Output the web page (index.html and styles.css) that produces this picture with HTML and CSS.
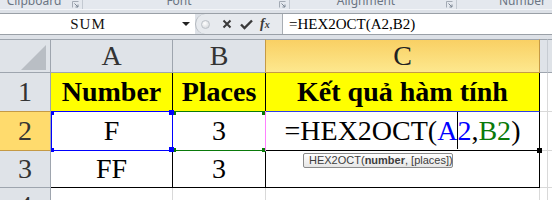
FILE: index.html
```html
<!DOCTYPE html>
<html>
<head>
<meta charset="utf-8">
<link rel="stylesheet" href="styles.css">
</head>
<body>
<div class="app">
  <div class="ribbon">
    <div class="grp g1"><span class="lbl">Clipboard</span><span class="launch"><svg width="7" height="7" viewBox="0 0 7 7"><path d="M0.5 6.5V0.5H6.5" fill="none" stroke="#a3aab4"/><path d="M2.5 2.5L6 6M6 3.5V6H3.5" fill="none" stroke="#7d8794"/></svg></span></div>
    <div class="grp g2"><span class="lbl">Font</span><span class="launch"><svg width="7" height="7" viewBox="0 0 7 7"><path d="M0.5 6.5V0.5H6.5" fill="none" stroke="#a3aab4"/><path d="M2.5 2.5L6 6M6 3.5V6H3.5" fill="none" stroke="#7d8794"/></svg></span></div>
    <div class="grp g3"><span class="lbl">Alignment</span><span class="launch"><svg width="7" height="7" viewBox="0 0 7 7"><path d="M0.5 6.5V0.5H6.5" fill="none" stroke="#a3aab4"/><path d="M2.5 2.5L6 6M6 3.5V6H3.5" fill="none" stroke="#7d8794"/></svg></span></div>
    <div class="grp g4"><span class="lbl lbl4">Number</span></div>
  </div>
  <div class="fwrap">
    <div class="fbar">
      <div class="namebox"><span class="nm">SUM</span><span class="dd"></span></div>
      <div class="btns">
        <span class="grip"></span>
        <svg class="ico-x" width="10" height="10" viewBox="0 0 10 10"><path d="M1.5 1.5L8.5 8.5M8.5 1.5L1.5 8.5" stroke="#3a3a3a" stroke-width="2" fill="none"/></svg>
        <svg class="ico-ok" width="13" height="11" viewBox="0 0 13 11"><path d="M1 5.5L4.5 9L12 1.5" stroke="#3a3a3a" stroke-width="2.4" fill="none"/></svg>
        <span class="fx">f<span class="fxx">x</span></span>
      </div>
      <div class="finput">=HEX2OCT(A2,B2)</div>
    </div>
  </div>
  <div class="sheet">
    <div class="hd corner"><span class="tri"></span></div>
    <div class="hd ch">A</div>
    <div class="hd ch chb">B</div>
    <div class="hd ch chsel">C</div>
    <div class="hd ch chd"></div>
    <div class="hd ch che"></div>

    <div class="hd rh rh1">1</div>
    <div class="c y">Number</div>
    <div class="c y">Places</div>
    <div class="c y c1">Kết quả hàm tính</div>
    <div class="e"></div>
    <div class="e last"></div>

    <div class="hd rh rhsel">2</div>
    <div class="c a2"><span class="ref refA"></span><span class="h hb hA1"></span><span class="h hb hA2"></span><span class="h hb hA3"></span><span class="h hb hA4"></span>F</div>
    <div class="c b2"><span class="ref refB"></span><span class="h hg hB1"></span><span class="h hg hB2"></span><span class="h hg hB3"></span><span class="h hg hB4"></span>3</div>
    <div class="c c2"><span class="pink"></span><span class="h hk hC"></span><span class="ftx">=HEX2OCT(<span class="blu">A<span class="caret">2</span></span>,<span class="grn">B2</span>)</span></div>
    <div class="e"></div>
    <div class="e last"></div>

    <div class="hd rh">3</div>
    <div class="c">FF</div>
    <div class="c">3</div>
    <div class="c c3"><span class="tip">HEX2OCT(<b>number</b>, [places])</span></div>
    <div class="e"></div>
    <div class="e last"></div>

    <div class="hd rh">4</div>
    <div class="e"></div>
    <div class="e"></div>
    <div class="e"></div>
    <div class="e"></div>
    <div class="e last"></div>
  </div>
</div>
</body>
</html>
```
FILE: styles.css
```css
html, body {
  margin: 0;
  padding: 0;
  width: 552px;
  height: 200px;
  overflow: hidden;
  background: #ffffff;
}
.app {
  width: 552px;
  height: 200px;
  overflow: hidden;
}

/* ribbon group labels */
.ribbon {
  display: flex;
  height: 9px;
  background: #e4e8ee;
  border-bottom: 1px solid #f3f5f8;
  overflow: hidden;
}
.grp {
  display: flex;
  box-sizing: border-box;
  border-right: 1px solid #c3c9d1;
}
.g1 { width: 83px; }
.g2 { width: 207px; }
.g3 { width: 167px; }
.g4 { flex: 1; border-right: none; }
.lbl {
  flex: 1;
  text-align: center;
  font: 12px "Noto Sans", sans-serif;
  line-height: 16px;
  margin-top: -7px;
  color: #6a7482;
  white-space: nowrap;
}
.lbl4 { flex: none; margin-left: 42px; }
.launch {
  width: 14px;
  display: flex;
  justify-content: center;
  padding-top: 1px;
}

/* formula bar */
.fwrap {
  background: #dde1e7;
  padding: 3px 0 4px;
}
.fbar {
  display: flex;
  height: 22px;
  box-sizing: border-box;
  border-top: 1px solid #9aa0a7;
  border-bottom: 1px solid #9aa0a7;
}
.namebox {
  width: 195px;
  background: #ffffff;
  display: flex;
  align-items: center;
}
.nm {
  width: 176px;
  text-align: center;
  font: 15px "Liberation Serif", serif;
  letter-spacing: 1px;
  color: #111;
}
.dd {
  width: 0;
  height: 0;
  border-left: 4px solid transparent;
  border-right: 4px solid transparent;
  border-top: 4px solid #222;
  margin-left: 6px;
}
.btns {
  width: 87px;
  box-sizing: border-box;
  display: flex;
  align-items: center;
  background: #e7eaee;
  border-left: 1px solid #b3b8be;
  border-radius: 10px 0 0 10px;
}
.grip {
  width: 9px;
  height: 9px;
  box-sizing: border-box;
  margin-left: 5px;
  border-radius: 50%;
  border: 1px solid #bcc1c7;
  background: radial-gradient(circle at 40% 35%, #ffffff, #cdd1d6);
}
.ico-x { margin-left: 12px; }
.ico-ok { margin-left: 8px; }
.fx {
  margin-left: 7px;
  font: italic bold 14px "Liberation Serif", serif;
  color: #3a3a3a;
  line-height: 14px;
}
.fxx { font-size: 10px; }
.finput {
  flex: 1;
  background: #ffffff;
  border-left: 1px solid #a8adb3;
  padding-left: 6px;
  font: 15px "Liberation Serif", serif;
  line-height: 20px;
  color: #000;
  white-space: nowrap;
}

/* sheet */
.sheet {
  display: grid;
  grid-template-columns: 51px 122px 93px 274px 8px 1fr;
  grid-template-rows: 34px 39px 39px 37px 37px;
  font-family: "Liberation Serif", serif;
}
.hd {
  box-sizing: border-box;
  background: #dfe3e8;
  border-right: 1px solid #9ea5ae;
  border-bottom: 1px solid #9ea5ae;
  display: flex;
  align-items: center;
  justify-content: center;
  font-size: 28px;
  color: #333;
}
.ch { border-top: 1px solid #9ea5ae; }
.corner {
  border-top: 1px solid #9ea5ae;
  align-items: flex-end;
  justify-content: flex-end;
  padding: 0 4px 2px 0;
}
.tri {
  width: 25px;
  height: 25px;
  background: #b9bec4;
  clip-path: polygon(100% 0, 100% 100%, 0 100%);
}
.chb { border-right-color: #c59a45; }
.chsel {
  background: linear-gradient(#f9d064, #fde88e);
  border-right-color: #c59a45;
  border-bottom-color: #c59a45;
  color: #222;
}
.chd { border-right-color: #c7ccd2; }
.che { border-right: none; }
.rh1 { border-bottom-color: #c59a45; }
.rhsel {
  background: #ffdb6d;
  border-bottom-color: #c59a45;
}

.c {
  position: relative;
  box-sizing: border-box;
  border-right: 1px solid #000;
  border-bottom: 1px solid #000;
  display: flex;
  align-items: center;
  justify-content: center;
  font-size: 28px;
  color: #000;
  white-space: nowrap;
}
.y {
  background: #ffff00;
  font-weight: bold;
}
.c1 { border-bottom-color: #2b3fe8; }
.e {
  box-sizing: border-box;
  border-right: 1px solid #d9d9d9;
  border-bottom: 1px solid #d9d9d9;
}
.e.last { border-right: none; }

/* reference highlights */
.ref {
  position: absolute;
  top: -1px;
  left: 0;
  right: -1px;
  bottom: -1px;
  border: 1px solid;
}
.refA { border-color: #0000ff; z-index: 3; }
.refB { left: -1px; border-color: #0a7a0a; z-index: 2; }
.h { position: absolute; }
.hb { background: #0000ff; z-index: 4; }
.hg { background: #0a7a0a; z-index: 2; }
.hk { background: #000; z-index: 5; }
.hA1 { left: 0; top: -1px; width: 3px; height: 4px; }
.hA2 { left: 0; top: 36px; width: 3px; height: 4px; }
.hA3 { left: 118px; top: -2px; width: 5px; height: 5px; }
.hA4 { left: 118px; top: 35px; width: 5px; height: 5px; }
.hB1 { left: -1px; top: -1px; width: 4px; height: 4px; }
.hB2 { left: -1px; top: 36px; width: 4px; height: 4px; }
.hB3 { left: 89px; top: -1px; width: 4px; height: 4px; }
.hB4 { left: 89px; top: 36px; width: 4px; height: 4px; }
.hC { left: 271px; top: 36px; width: 5px; height: 5px; }
.pink {
  position: absolute;
  left: -1px;
  top: -1px;
  bottom: -1px;
  width: 1px;
  background: #ff80ff;
  z-index: 5;
}
.blu { color: #0000ff; }
.grn { color: #0a7a0a; }
.caret { position: relative; }
.caret::before {
  content: "";
  position: absolute;
  left: 0;
  top: -3px;
  bottom: -3px;
  width: 1px;
  background: #000;
}

/* tooltip */
.tip {
  position: absolute;
  left: 37px;
  top: 2px;
  width: 150px;
  height: 15px;
  box-sizing: border-box;
  border: 1px solid #8a8a8a;
  border-radius: 2px;
  background: linear-gradient(#ffffff, #e6e6e6);
  font: 11px "Liberation Sans", sans-serif;
  line-height: 13px;
  color: #3d3d3d;
  padding-left: 5px;
  white-space: nowrap;
  z-index: 6;
}
```
